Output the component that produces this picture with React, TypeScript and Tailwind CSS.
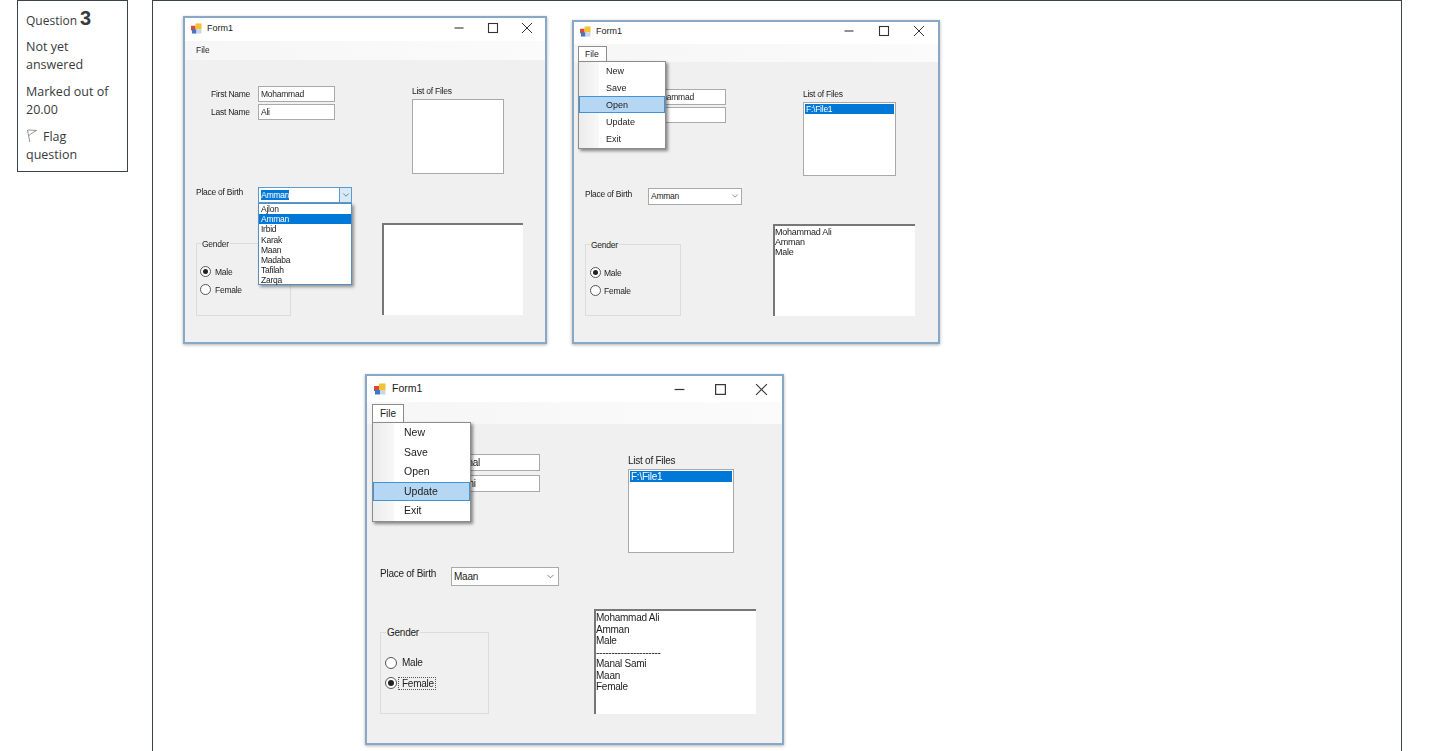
import type { ReactNode } from "react";
import { ChevronDown } from "lucide-react";

function FormIcon({ className }: { className: string }) {
  return (
    <svg viewBox="0 0 12 12" className={className}>
      <rect x="0" y="3" width="5" height="5" fill="#d9483b" />
      <rect x="5" y="0.5" width="6.5" height="6.5" fill="#f2c230" />
      <rect x="1" y="7" width="5" height="4.5" fill="#3f78c9" />
      <rect x="6" y="7" width="5.5" height="4.5" fill="#c9d6e8" />
    </svg>
  );
}

function FlagIcon() {
  return (
    <svg viewBox="0 0 12 14" className="w-3 h-[14px]" fill="none" stroke="#8a8a8a" strokeWidth="0.9">
      <path d="M1.5 1 L3.8 13" />
      <path d="M1.5 1 L10.5 1.4 L5 4.8 L2.6 7" />
    </svg>
  );
}

function Caption({ className }: { className: string }) {
  return (
    <div className={`flex items-center ml-auto ${className}`}>
      <svg viewBox="0 0 12 12" className="w-[1em] h-[1em]" stroke="#333" strokeWidth="1.1" fill="none">
        <path d="M1.5 6 H10.5" />
      </svg>
      <svg viewBox="0 0 12 12" className="w-[1em] h-[1em]" stroke="#333" strokeWidth="1.1" fill="none">
        <rect x="1.5" y="1.5" width="9" height="9" />
      </svg>
      <svg viewBox="0 0 12 12" className="w-[1em] h-[1em]" stroke="#333" strokeWidth="1" fill="none">
        <path d="M1 1 L11 11 M11 1 L1 11" />
      </svg>
    </div>
  );
}

function Field({ className, children }: { className: string; children?: ReactNode }) {
  return <div className={`shrink-0 bg-white border border-[#a9a9a9] whitespace-nowrap ${className}`}>{children}</div>;
}

function Radio({ className, dot, on }: { className: string; dot: string; on?: boolean }) {
  return (
    <span className={`shrink-0 rounded-full border border-[#555] bg-white flex items-center justify-center ${className}`}>
      {on && <span className={`rounded-full bg-[#222] ${dot}`} />}
    </span>
  );
}

function Gender({ className, legend, children }: { className: string; legend: string; children: ReactNode }) {
  return (
    <div className={`relative flex flex-col border border-[#dcdcdc] ${className}`}>
      <span className={`absolute bg-[#f0f0f0] px-[1px] leading-[12px] ${legend}`}>Gender</span>
      {children}
    </div>
  );
}

function TextArea({ className, lines }: { className: string; lines: string[] }) {
  return (
    <div className={`bg-white border-t-2 border-l-2 border-[#777] ${className}`}>
      {lines.map((l, i) => (
        <div key={i} className="whitespace-nowrap overflow-hidden">
          {l}
        </div>
      ))}
    </div>
  );
}

function FileMenu({
  tab,
  menu,
  text,
  gutter,
  item,
  active,
}: {
  tab: string;
  menu: string;
  text: string;
  gutter: string;
  item: string;
  active: string;
}) {
  const items = ["New", "Save", "Open", "Update", "Exit"];
  return (
    <div className={`relative z-20 bg-white border border-b-0 border-[#8c8c8c] ${tab}`}>
      File
      <div className={`absolute z-10 -left-px bg-white border border-[#8c8c8c] shadow-[2px_2px_3px_rgba(0,0,0,0.45)] ${menu}`}>
        <div className={`absolute left-0 top-0 bottom-0 bg-gradient-to-r from-[#ececec] to-[#f8f8f8] ${gutter}`} />
        <div className="relative flex flex-col">
          {items.map((t) => (
            <div
              key={t}
              className={`flex items-center border ${text} ${item} ${t === active ? "bg-[#b5d7f3] border-[#3f93d6]" : "border-transparent"}`}
            >
              {t}
            </div>
          ))}
        </div>
      </div>
    </div>
  );
}

function Win({
  className,
  head,
  title,
  icon,
  bar,
  caption,
  menu,
  children,
}: {
  className: string;
  head: string;
  title: string;
  icon: string;
  bar: string;
  caption: string;
  menu: ReactNode;
  children: ReactNode;
}) {
  return (
    <div className={`flex flex-col shrink-0 bg-[#f0f0f0] border-2 border-[#88a8c8] shadow-[0_1px_3px_rgba(0,0,0,0.3)] blur-[0.4px] text-[#1c1c1c] font-['Liberation_Sans',sans-serif] ${className}`}>
      <div className={`flex items-center bg-white ${head}`}>
        <FormIcon className={icon} />
        <span className={title}>Form1</span>
        <Caption className={caption} />
      </div>
      <div className={`flex bg-gradient-to-r from-[#f6f6f6] to-[#fbfbfb] ${bar}`}>{menu}</div>
      <div className="flex items-start flex-1">{children}</div>
    </div>
  );
}

function Sidebar() {
  return (
    <aside className="shrink-0 ml-[17px] w-[111px] h-[172px] border border-[#3a444c] px-2 pt-[7px] text-[12.5px] leading-[18px] text-[#373a3c] font-['Open_Sans',sans-serif]">
      <div className="flex items-baseline mb-[8px]">
        <span className="text-[12px]">Question</span>
        <span className="ml-[3px] text-[20px] leading-[20px] font-bold font-['Liberation_Sans',sans-serif]">3</span>
      </div>
      <p className="mb-[9px]">Not yet answered</p>
      <p className="mb-[9px]">Marked out of 20.00</p>
      <p>
        <span className="inline-block align-[-2px] mr-[5px]">
          <FlagIcon />
        </span>
        Flag question
      </p>
    </aside>
  );
}

export default function App() {
  return (
    <div className="flex items-start w-[1438px] h-[751px] overflow-hidden bg-white">
      <Sidebar />
      <main className="shrink-0 ml-[24px] w-[1250px] h-[780px] border border-[#3a444c]">
        <div className="flex items-start pl-[30px] pt-[15px]">
          {/* before: combo list open */}
          <Win
            className="w-[364px] h-[328px]"
            head="h-[23px] pl-[6px] pr-[12px] pb-[3px]"
            title="ml-[5px] mt-[2px] text-[9px]"
            icon="w-[11px] h-[11px]"
            bar="h-[19px] pl-[11px] items-center text-[8.5px]"
            caption="gap-[22px] text-[12px]"
            menu="File"
          >
            <div className="flex flex-col w-[197px] pl-[11px] pt-[26px] text-[8.5px] tracking-[-0.25px] leading-[12px]">
              <div className="flex flex-col gap-[2px] pl-[15px]">
                <div className="flex items-center">
                  <span className="w-[47px]">First Name</span>
                  <Field className="w-[77px] h-[16px] pl-[2px] leading-[14px]">Mohammad</Field>
                </div>
                <div className="flex items-center">
                  <span className="w-[47px]">Last Name</span>
                  <Field className="w-[77px] h-[16px] pl-[2px] leading-[14px]">Ali</Field>
                </div>
              </div>
              <div className="flex items-start mt-[66px]">
                <span className="w-[62px] whitespace-nowrap">Place of Birth</span>
                <div className="relative mt-[1px] w-[94px] h-[16px] bg-white border border-[#5a9bd0] flex items-center pl-[2px]">
                  <span className="bg-[#0078d7] text-white leading-[10px]">Amman</span>
                  <span className="absolute right-0 top-0 bottom-0 w-[12px] bg-[#d8e9f7] border-l border-[#5a9bd0] flex items-center justify-center">
                    <ChevronDown className="w-[10px] h-[10px] text-[#444]" strokeWidth={1.5} />
                  </span>
                  <div className="absolute z-10 -left-px top-[15px] w-[94px] h-[82px] bg-white border border-[#5a8fbd] shadow-[2px_2px_3px_rgba(0,0,0,0.4)] leading-[10.2px]">
                    {["Ajlon", "Amman", "Irbid", "Karak", "Maan", "Madaba", "Tafilah", "Zarqa"].map((c) => (
                      <div key={c} className={`pl-[2px] h-[10.2px] ${c === "Amman" ? "bg-[#0078d7] text-white" : ""}`}>
                        {c}
                      </div>
                    ))}
                  </div>
                </div>
              </div>
              <Gender className="mt-[40px] w-[95px] h-[73px] pl-[3px] pt-[22px] gap-[7px]" legend="left-[4px] -top-[6px]">
                <div className="flex items-center gap-[4px] h-[11px]">
                  <Radio className="w-[11px] h-[11px]" dot="w-[5px] h-[5px]" on />
                  <span>Male</span>
                </div>
                <div className="flex items-center gap-[4px] h-[11px]">
                  <Radio className="w-[11px] h-[11px]" dot="w-[5px] h-[5px]" />
                  <span>Female</span>
                </div>
              </Gender>
            </div>
            <div className="flex flex-col pt-[25px] text-[8.5px] tracking-[-0.25px] leading-[12px]">
              <span className="ml-[30px] mb-[2px]">List of Files</span>
              <Field className="ml-[30px] w-[92px] h-[75px]" />
              <TextArea className="mt-[49px] w-[141px] h-[92px]" lines={[]} />
            </div>
          </Win>

          {/* after open: menu with Open highlighted */}
          <Win
            className="ml-[25px] mt-[4px] w-[368px] h-[324px]"
            head="h-[22px] pl-[6px] pr-[13px] pb-[4px]"
            title="ml-[5px] mt-[2px] text-[9px]"
            icon="w-[11px] h-[11px]"
            bar="h-[18px] pl-[4px] pt-[2px] text-[8.5px]"
            caption="gap-[23px] text-[12px]"
            menu={
              <FileMenu
                tab="w-[29px] h-[16px] leading-[14px] pl-[6px]"
                menu="top-[14px] w-[88px] h-[88px]"
                text="text-[9px]"
                gutter="w-[20px]"
                item="h-[17px] pl-[26px]"
                active="Open"
              />
            }
          >
            <div className="flex flex-col w-[199px] pl-[11px] pt-[27px] text-[8.5px] tracking-[-0.25px] leading-[12px]">
              {/* name labels sit behind the open menu */}
              <div className="flex flex-col items-start gap-[2px] pl-[63px]">
                <Field className="w-[78px] h-[16px] pl-[2px] leading-[14px]">Mohammad</Field>
                <Field className="w-[78px] h-[16px] pl-[2px] leading-[14px]">Ali</Field>
              </div>
              <div className="flex items-start mt-[65px]">
                <span className="w-[63px] whitespace-nowrap">Place of Birth</span>
                <Field className="relative w-[94px] h-[17px] pl-[2px] leading-[15px]">
                  Amman
                  <ChevronDown className="absolute right-[1px] top-[2px] w-[10px] h-[10px] text-[#555]" strokeWidth={1.5} />
                </Field>
              </div>
              <Gender className="mt-[39px] w-[96px] h-[72px] pl-[4px] pt-[22px] gap-[7px]" legend="left-[4px] -top-[6px]">
                <div className="flex items-center gap-[3px] h-[11px]">
                  <Radio className="w-[11px] h-[11px]" dot="w-[5px] h-[5px]" on />
                  <span>Male</span>
                </div>
                <div className="flex items-center gap-[3px] h-[11px]">
                  <Radio className="w-[11px] h-[11px]" dot="w-[5px] h-[5px]" />
                  <span>Female</span>
                </div>
              </Gender>
            </div>
            <div className="flex flex-col pt-[26px] text-[8.5px] tracking-[-0.25px] leading-[12px]">
              <span className="ml-[30px] mb-[2px]">List of Files</span>
              <Field className="ml-[30px] w-[93px] h-[74px] p-[1px]">
                <div className="bg-[#0078d7] text-white h-[10px] leading-[10px] pl-[1px]">F:\File1</div>
              </Field>
              <TextArea
                className="mt-[48px] w-[142px] h-[92px] text-[9px] leading-[10px] pt-[1px]"
                lines={["Mohammad Ali", "Amman", "Male"]}
              />
            </div>
          </Win>
        </div>

        {/* after update: second record appended */}
        <Win
          className="ml-[212px] mt-[30px] w-[419px] h-[371px]"
          head="h-[26px] pl-[7px] pr-[14px]"
          title="ml-[6px] text-[10.5px]"
          icon="w-[12px] h-[12px]"
          bar="h-[22px] pl-[5px] pt-[2px] text-[10px]"
          caption="gap-[28px] text-[13px]"
          menu={
            <FileMenu
              tab="w-[32px] h-[20px] leading-[17px] pl-[7px]"
              menu="top-[17px] w-[99px] h-[100px]"
              text="text-[10.5px]"
              gutter="w-[21px]"
              item="h-[19.5px] pl-[30px]"
              active="Update"
            />
          }
        >
          <div className="flex flex-col w-[227px] pl-[13px] pt-[30px] text-[10px] tracking-[-0.25px] leading-[12px]">
            {/* name labels sit behind the open menu */}
            <div className="flex flex-col items-start gap-[4px] pl-[71px]">
              <Field className="w-[89px] h-[17px] pl-[2px] leading-[15px]">Manal</Field>
              <Field className="w-[89px] h-[17px] pl-[2px] leading-[15px]">Sami</Field>
            </div>
            <div className="flex items-start mt-[75px]">
              <span className="w-[71px] mt-[1px] whitespace-nowrap">Place of Birth</span>
              <Field className="relative w-[108px] h-[19px] pl-[2px] leading-[17px]">
                Maan
                <ChevronDown className="absolute right-[2px] top-[3px] w-[11px] h-[11px] text-[#555]" strokeWidth={1.5} />
              </Field>
            </div>
            <Gender className="mt-[46px] w-[109px] h-[82px] pl-[4px] pt-[24px] gap-[8px]" legend="left-[5px] -top-[6px]">
              <div className="flex items-center h-[12px]">
                <Radio className="w-[12px] h-[12px]" dot="w-[6px] h-[6px]" />
                <span className="ml-[5px]">Male</span>
              </div>
              <div className="flex items-center h-[12px]">
                <Radio className="w-[12px] h-[12px]" dot="w-[6px] h-[6px]" on />
                <span className="ml-[1px] w-[38px] h-[13px] border border-dotted border-[#555] pl-[3px] leading-[11px]">Female</span>
              </div>
            </Gender>
          </div>
          <div className="flex flex-col pt-[31px] text-[10px] tracking-[-0.25px] leading-[12px]">
            <span className="ml-[34px] mb-[2px]">List of Files</span>
            <Field className="ml-[34px] w-[106px] h-[84px] p-[1px]">
              <div className="bg-[#0078d7] text-white h-[11px] leading-[11px] pl-[1px]">F:\File1</div>
            </Field>
            <TextArea
              className="mt-[56px] w-[162px] h-[105px] leading-[11.5px] pt-[1px]"
              lines={["Mohammad Ali", "Amman", "Male", "---------------------", "Manal Sami", "Maan", "Female"]}
            />
          </div>
        </Win>
      </main>
    </div>
  );
}
